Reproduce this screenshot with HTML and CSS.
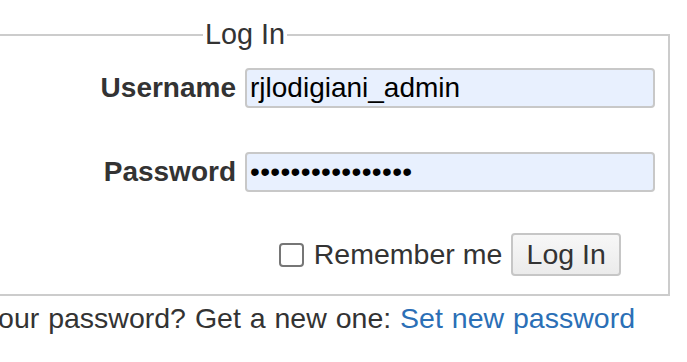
FILE: index.html
```html
<!DOCTYPE html>
<html lang="en">
<head>
<meta charset="utf-8">
<title>Log In</title>
<link rel="stylesheet" href="styles.css">
</head>
<body>
<div class="page">
  <form class="login-form" action="#" onsubmit="return false;">
    <fieldset class="login-box">
      <legend class="login-legend">Log In</legend>
      <div class="login-grid">
        <label class="field-label" for="username">Username</label>
        <input class="field-input" id="username" type="text" value="rjlodigiani_admin">
        <label class="field-label row-second" for="password">Password</label>
        <input class="field-input input-password row-second" id="password" type="password" value="abcdefghijklmnop">
        <div class="actions">
          <input class="remember-box" id="remember" type="checkbox">
          <label class="remember-label" for="remember">Remember me</label>
          <button class="login-button" type="submit">Log In</button>
        </div>
      </div>
    </fieldset>
  </form>
  <p class="lost">Lost your password? Get a new one: <a class="lost-link" href="#">Set new password</a></p>
</div>
</body>
</html>
```
FILE: styles.css
```css
html, body {
  margin: 0;
  padding: 0;
  background: #ffffff;
}
body {
  font-family: "Liberation Sans", Arial, sans-serif;
  font-size: 28.5px;
  color: #333333;
  overflow: hidden;
}
.page {
  margin-left: -100px;
  width: 800px;
}
.login-form {
  margin: 0;
}
.login-box {
  box-sizing: border-box;
  width: 770px;
  margin: 18px 0 0 0;
  border: 2px solid #cccccc;
  padding: 17px 13px 18px 20px;
  min-width: 0;
}
.login-legend {
  margin-left: 281px;
  padding: 0 2px;
  font-size: 28.8px;
  color: #333333;
}
.login-grid {
  display: grid;
  grid-template-columns: 314px 410px;
  column-gap: 9px;
  align-items: center;
}
.field-label {
  font-weight: bold;
  font-size: 28px;
  text-align: right;
  color: #333333;
}
.field-input {
  box-sizing: border-box;
  height: 40px;
  width: 410px;
  margin: 0;
  border: 2px solid #c8c8c8;
  border-radius: 4px;
  padding: 0 3px;
  background-color: #e8f0fe;
  font-family: "Liberation Sans", Arial, sans-serif;
  font-size: 28px;
  color: #000000;
  outline: none;
}
.input-password {
  letter-spacing: 0.35px;
}
.login-grid .row-second {
  margin-top: 44px;
}
.actions {
  grid-column: 2;
  margin-top: 41px;
  display: flex;
  align-items: center;
  justify-content: center;
}
.remember-box {
  appearance: none;
  -webkit-appearance: none;
  box-sizing: border-box;
  width: 25px;
  height: 24px;
  margin: 0 10px 0 0;
  border: 2px solid #767676;
  border-radius: 4px;
  background: #ffffff;
}
.remember-label {
  color: #333333;
  margin-right: 9px;
}
.login-button {
  box-sizing: border-box;
  height: 43px;
  width: 110px;
  margin: 0;
  padding: 0;
  border: 2px solid #c6c6c6;
  border-radius: 4px;
  background: linear-gradient(#f7f7f7, #ebebeb);
  font-family: "Liberation Sans", Arial, sans-serif;
  font-size: 28.5px;
  color: #333333;
}
.lost {
  margin: 6px 0 0 21px;
  white-space: nowrap;
  word-spacing: 1px;
  color: #333333;
}
.lost-link {
  color: #2b6fb6;
  text-decoration: none;
}
```
